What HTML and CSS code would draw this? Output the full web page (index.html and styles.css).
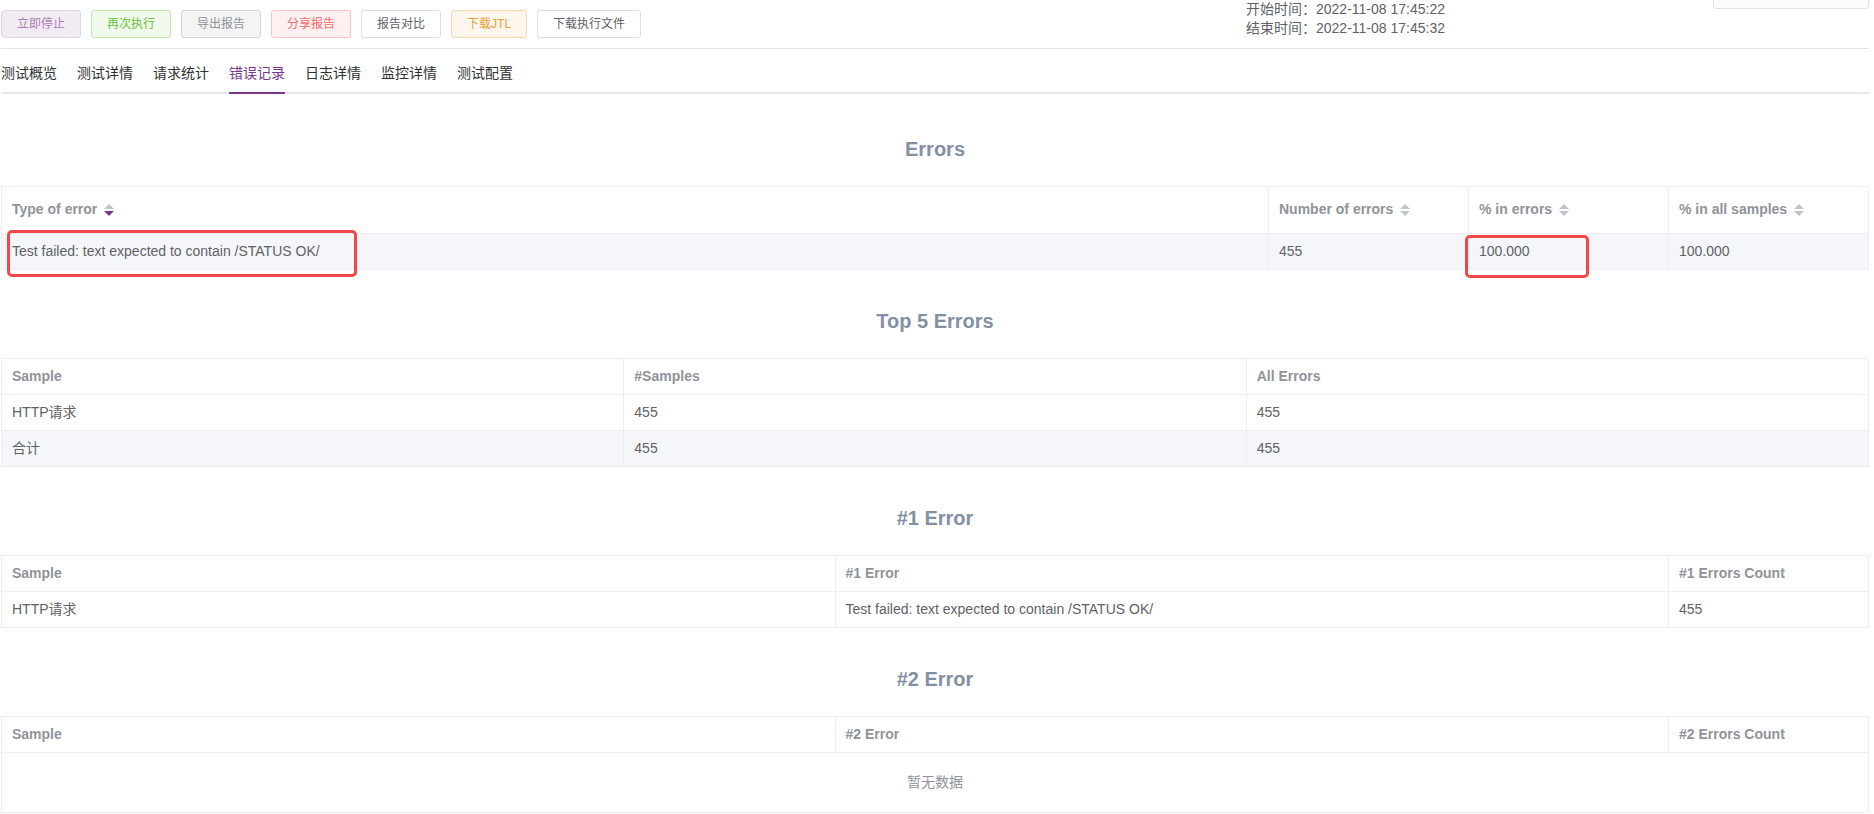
FILE: index.html
```html
<!DOCTYPE html>
<html lang="zh-CN">
<head>
    <meta charset="UTF-8">
    <meta name="viewport" content="width=device-width, initial-scale=1.0">
    <title>测试报告 - 错误记录</title>
    <link rel="stylesheet" href="styles.css">
</head>
<body>
    <div class="page">
        <div class="header">
            <div class="actions">
                <button class="btn btn-purple">立即停止</button>
                <button class="btn btn-green">再次执行</button>
                <button class="btn btn-gray">导出报告</button>
                <button class="btn btn-red">分享报告</button>
                <button class="btn">报告对比</button>
                <button class="btn btn-orange">下载JTL</button>
                <button class="btn">下载执行文件</button>
            </div>
            <div class="times">
                <div>开始时间：2022-11-08 17:45:22</div>
                <div>结束时间：2022-11-08 17:45:32</div>
            </div>
            <div class="corner-box"></div>
        </div>

        <div class="tabs">
            <div class="tab">测试概览</div>
            <div class="tab">测试详情</div>
            <div class="tab">请求统计</div>
            <div class="tab active">错误记录</div>
            <div class="tab">日志详情</div>
            <div class="tab">监控详情</div>
            <div class="tab">测试配置</div>
        </div>

        <h3 class="section-title first">Errors</h3>
        <div class="table-wrap">
            <table class="grid">
                <colgroup>
                    <col>
                    <col class="w200">
                    <col class="w200">
                    <col class="w200">
                </colgroup>
                <thead>
                    <tr>
                        <th>Type of error<span class="caret desc"><i class="up"></i><i class="down"></i></span></th>
                        <th>Number of errors<span class="caret"><i class="up"></i><i class="down"></i></span></th>
                        <th>% in errors<span class="caret"><i class="up"></i><i class="down"></i></span></th>
                        <th>% in all samples<span class="caret"><i class="up"></i><i class="down"></i></span></th>
                    </tr>
                </thead>
                <tbody>
                    <tr class="hover">
                        <td>Test failed: text expected to contain /STATUS OK/</td>
                        <td>455</td>
                        <td>100.000</td>
                        <td>100.000</td>
                    </tr>
                </tbody>
            </table>
            <div class="mark mark-type"></div>
            <div class="mark mark-pct"></div>
        </div>

        <h3 class="section-title">Top 5 Errors</h3>
        <table class="grid">
            <thead>
                <tr>
                    <th>Sample</th>
                    <th>#Samples</th>
                    <th>All Errors</th>
                </tr>
            </thead>
            <tbody>
                <tr>
                    <td>HTTP请求</td>
                    <td>455</td>
                    <td>455</td>
                </tr>
                <tr class="stripe">
                    <td>合计</td>
                    <td>455</td>
                    <td>455</td>
                </tr>
            </tbody>
        </table>

        <h3 class="section-title">#1 Error</h3>
        <table class="grid">
            <colgroup>
                <col>
                <col>
                <col class="w200">
            </colgroup>
            <thead>
                <tr>
                    <th>Sample</th>
                    <th>#1 Error</th>
                    <th>#1 Errors Count</th>
                </tr>
            </thead>
            <tbody>
                <tr>
                    <td>HTTP请求</td>
                    <td>Test failed: text expected to contain /STATUS OK/</td>
                    <td>455</td>
                </tr>
            </tbody>
        </table>

        <h3 class="section-title">#2 Error</h3>
        <table class="grid">
            <colgroup>
                <col>
                <col>
                <col class="w200">
            </colgroup>
            <thead>
                <tr>
                    <th>Sample</th>
                    <th>#2 Error</th>
                    <th>#2 Errors Count</th>
                </tr>
            </thead>
            <tbody>
                <tr>
                    <td class="empty" colspan="3">暂无数据</td>
                </tr>
            </tbody>
        </table>
    </div>
</body>
</html>
```

FILE: styles.css
```css
body {
    margin: 0;
    font-family: "Liberation Sans", Arial, "Noto Sans CJK SC", sans-serif;
    font-size: 14px;
    color: #606266;
    background: #fff;
}

.page {
    width: 1868px;
    margin-left: 1px;
}

.header {
    display: grid;
    grid-template-columns: 1245px 1fr 156px;
    align-items: start;
    height: 48px;
    border-bottom: 1px solid #dfe1ea;
}

.actions {
    display: flex;
    gap: 10px;
    margin-top: 10px;
}

.btn {
    height: 28px;
    padding: 0 15px;
    font-family: inherit;
    font-size: 12px;
    line-height: 26px;
    color: #606266;
    background: #fff;
    border: 1px solid #dcdfe6;
    border-radius: 3px;
    white-space: nowrap;
    cursor: pointer;
}

.btn-purple {
    color: #aa7db5;
    background: #f2ebf3;
    border-color: #e2d3e6;
}

.btn-green {
    color: #67c23a;
    background: #f0f9eb;
    border-color: #c2e7b0;
}

.btn-gray {
    color: #909399;
    background: #f4f4f5;
    border-color: #d3d4d6;
}

.btn-red {
    color: #f56c6c;
    background: #fef0f0;
    border-color: #fbc4c4;
}

.btn-orange {
    color: #e6a23c;
    background: #fdf6ec;
    border-color: #f5dab1;
}

.times {
    font-size: 14px;
    line-height: 19px;
    color: #606266;
    white-space: nowrap;
}

.corner-box {
    height: 8px;
    background: #fcfcfd;
    border: 1px solid #dfe1ea;
    border-top: none;
    border-radius: 0 0 4px 4px;
}

.tabs {
    display: flex;
    gap: 20px;
    margin-top: 5px;
    border-bottom: 2px solid #e4e7ed;
}

.tab {
    height: 38px;
    line-height: 38px;
    font-size: 14px;
    color: #303133;
    border-bottom: 2px solid transparent;
    margin-bottom: -2px;
    cursor: pointer;
}

.tab.active {
    color: #783887;
    border-bottom-color: #783887;
}

.section-title {
    margin: 37px 0 23px;
    font-size: 20px;
    line-height: 28px;
    font-weight: bold;
    text-align: center;
    color: #8390a4;
}

.section-title.first {
    margin-top: 41px;
}

.table-wrap {
    position: relative;
}

.grid {
    width: 100%;
    border-collapse: collapse;
    table-layout: fixed;
    border: 1px solid #ebeef5;
}

.grid col.w200 {
    width: 200px;
}

.grid th,
.grid td {
    padding: 6px 10px;
    line-height: 23px;
    text-align: left;
    border: 1px solid #ebeef5;
    white-space: nowrap;
    overflow: hidden;
}

.grid th {
    font-weight: bold;
    color: #909399;
}

.grid td {
    color: #606266;
}

.grid tr.hover td,
.grid tr.stripe td {
    background: #f5f6fa;
}

.grid td.empty {
    height: 59px;
    padding: 0;
    line-height: 59px;
    text-align: center;
    color: #909399;
}

.caret {
    display: inline-flex;
    flex-direction: column;
    justify-content: center;
    gap: 2px;
    width: 24px;
    height: 34px;
    padding-left: 7px;
    box-sizing: border-box;
    vertical-align: middle;
}

.caret i {
    display: block;
    width: 0;
    height: 0;
    border-left: 5px solid transparent;
    border-right: 5px solid transparent;
}

.caret .up {
    border-bottom: 5px solid #c0c4cc;
}

.caret .down {
    border-top: 5px solid #c0c4cc;
}

.caret.desc .down {
    border-top-color: #783887;
}

.mark {
    position: absolute;
    box-sizing: border-box;
    border: 3px solid #f04848;
    border-radius: 5px;
    pointer-events: none;
}

.mark-type {
    left: 6px;
    top: 44px;
    width: 350px;
    height: 47px;
}

.mark-pct {
    left: 1464px;
    top: 49px;
    width: 124px;
    height: 43px;
}
```
